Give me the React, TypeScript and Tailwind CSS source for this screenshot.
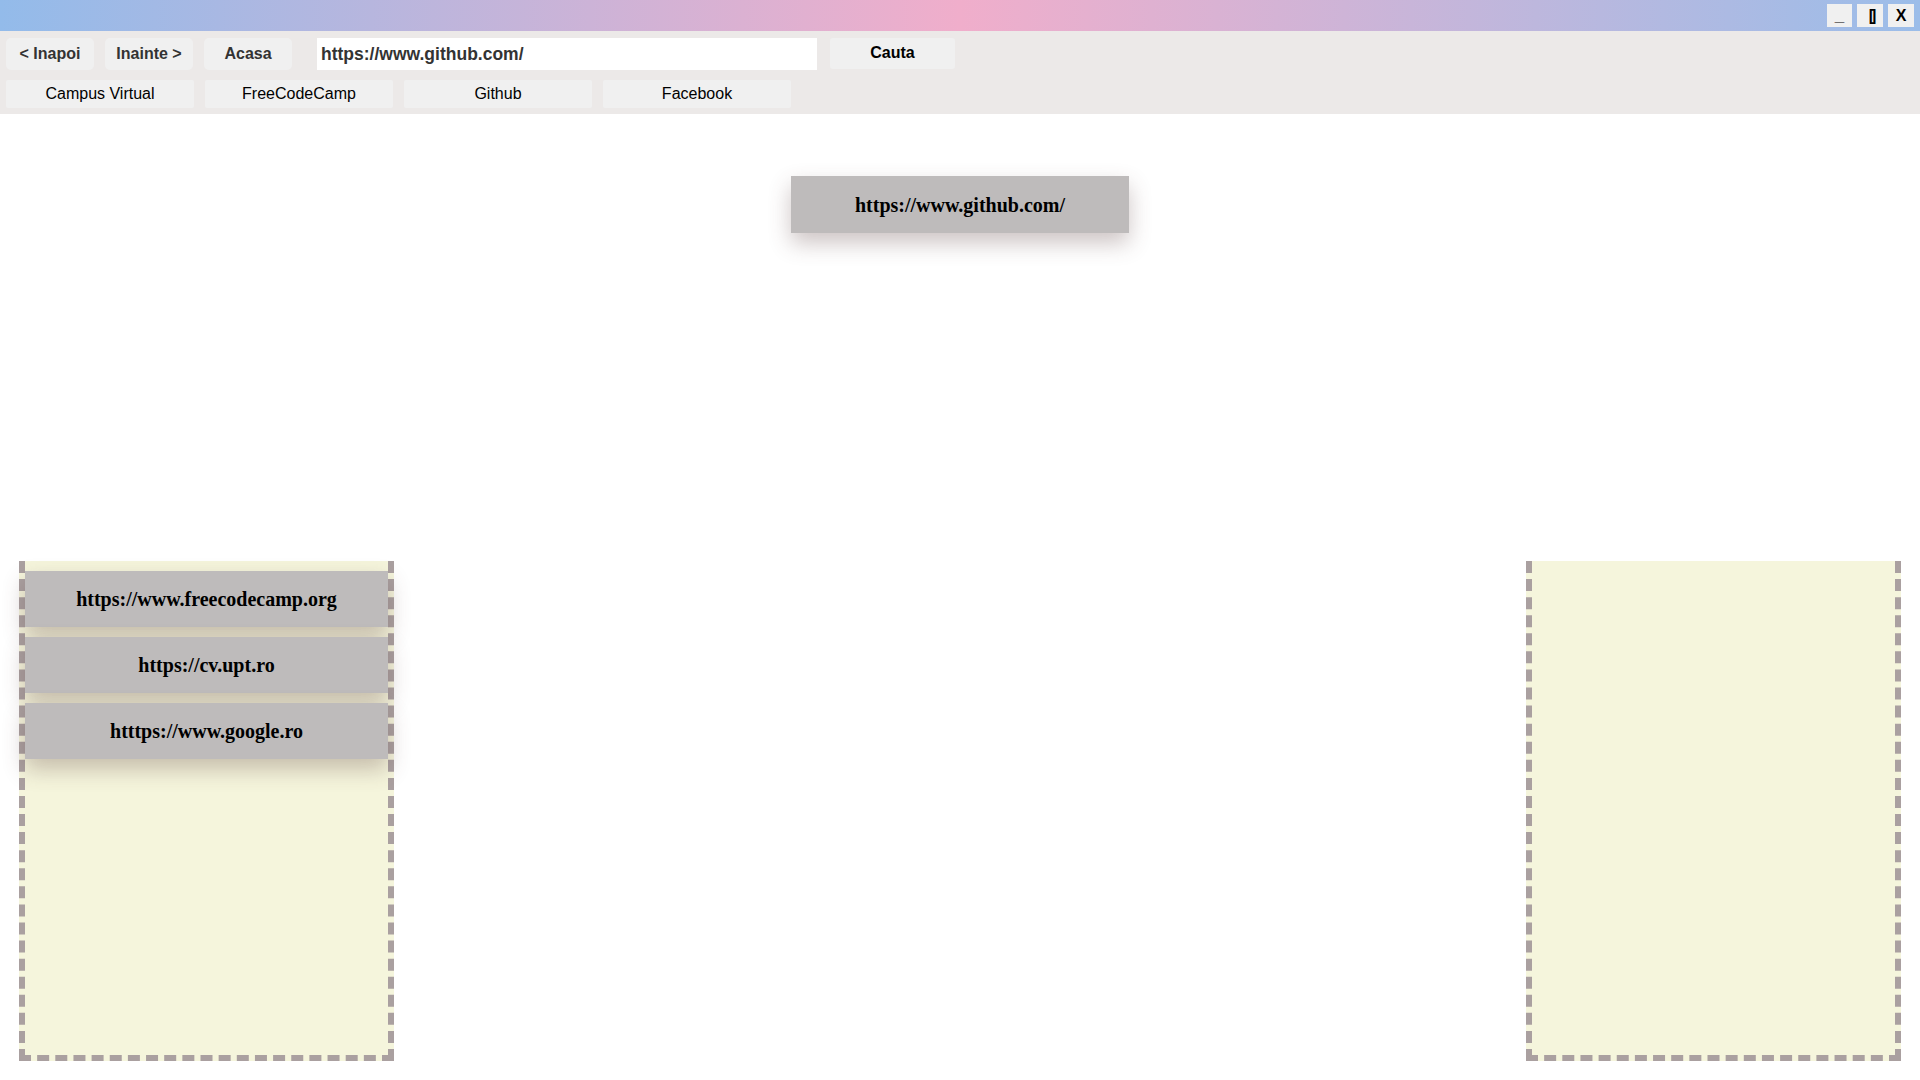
import React from 'react';

const navButtons = ['< Inapoi', 'Inainte >', 'Acasa'];
const bookmarks = ['Campus Virtual', 'FreeCodeCamp', 'Github', 'Facebook'];
const history = ['https://www.freecodecamp.org', 'https://cv.upt.ro', 'htttps://www.google.ro'];

const App: React.FC = () => {
  return (
    <div className="h-screen flex flex-col overflow-hidden bg-white font-['Liberation_Sans',Arial,sans-serif]">
      {/* title bar */}
      <div className="h-[31px] shrink-0 flex items-start justify-end gap-[5px] pt-[4px] pr-[6px] bg-[linear-gradient(to_right,#93bbea,#f0aecb_50%,#9bbde9)]">
        <div className="w-[25px] h-[23px] bg-[#f0f0f0] flex items-center justify-center text-[17px] font-bold text-black leading-none">_</div>
        <div className="w-[26px] h-[23px] bg-[#f0f0f0] flex items-center justify-center text-[16px] font-bold text-black leading-none tracking-[-3px] pl-[2px]">[]</div>
        <div className="w-[26px] h-[23px] bg-[#f0f0f0] flex items-center justify-center text-[16px] font-bold text-black leading-none">X</div>
      </div>

      {/* toolbar */}
      <div className="h-[83px] shrink-0 bg-[#ece9e8] px-[6px] pt-[7px] flex flex-col gap-[10px]">
        <div className="flex items-start gap-[11px]">
          {navButtons.map(b => (
            <button key={b} className="w-[88px] h-[32px] rounded-[5px] bg-[#f0f0f0] text-[16px] font-bold text-[#333]">
              {b}
            </button>
          ))}
          <input
            readOnly
            value="https://www.github.com/"
            className="ml-[14px] w-[500px] h-[32px] bg-white px-[4px] text-[17.5px] font-bold text-[#333] outline-none"
          />
          <button className="ml-[2px] w-[125px] h-[31px] rounded-[3px] bg-[#f0f0f0] text-[16px] font-bold text-black pb-[2px]">Cauta</button>
        </div>
        <div className="flex items-start gap-[11px]">
          {bookmarks.map(b => (
            <button key={b} className="w-[188px] h-[28px] rounded-[2px] bg-[#f0f0f0] text-[16px] text-black">
              {b}
            </button>
          ))}
        </div>
      </div>

      {/* content */}
      <div className="flex-1 flex flex-col px-[19px] pb-[19px]">
        <div className="mx-auto mt-[62px] w-[338px] h-[57px] bg-[#bebbbb] flex items-center justify-center shadow-[0_10px_22px_rgba(90,60,60,0.3)] font-['Liberation_Serif','Times_New_Roman',serif] text-[20px] font-bold text-black">
          https://www.github.com/
        </div>

        <div className="mt-auto flex justify-between">
          <div className="w-[375px] h-[500px] bg-[#f5f5dc] border-[6px] border-t-0 border-dashed border-[#aaa0a0] pt-[10px] flex flex-col gap-[10px]">
            {history.map(h => (
              <div
                key={h}
                className="h-[56px] bg-[#bebbbb] flex items-center justify-center shadow-[0_10px_22px_rgba(90,60,60,0.3)] font-['Liberation_Serif','Times_New_Roman',serif] text-[20px] font-bold text-black"
              >
                {h}
              </div>
            ))}
          </div>
          <div className="w-[375px] h-[500px] bg-[#f5f5dc] border-[6px] border-t-0 border-dashed border-[#aaa0a0]" />
        </div>
      </div>
    </div>
  );
};

export default App;
